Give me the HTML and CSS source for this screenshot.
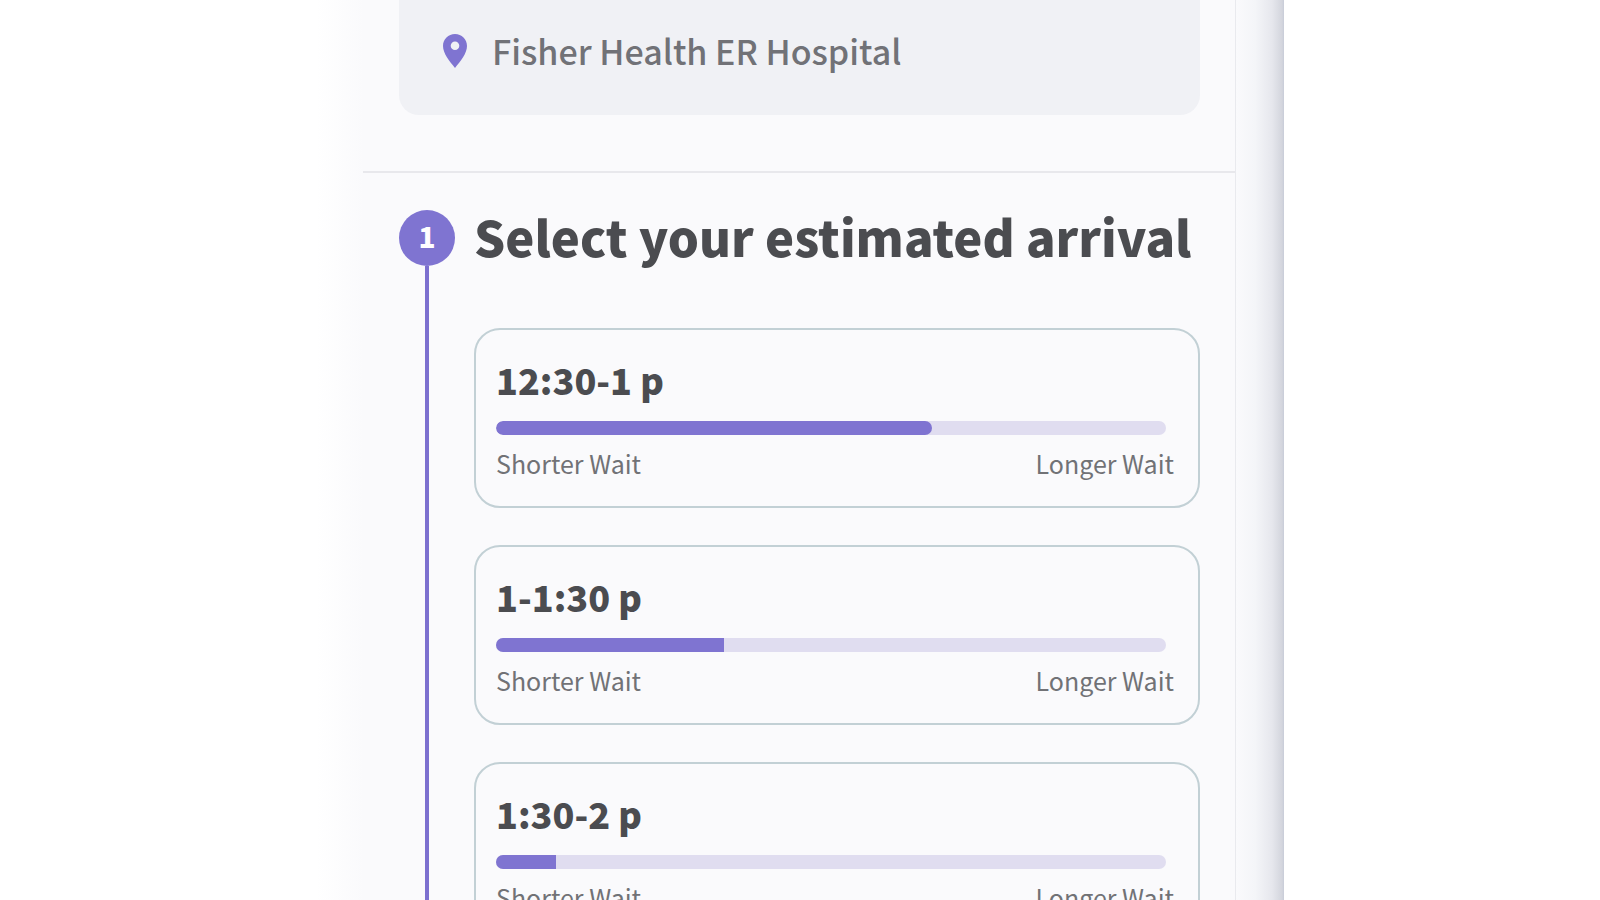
FILE: index.html
```html
<!DOCTYPE html>
<html lang="en">

<head>
    <meta charset="UTF-8">
    <meta name="viewport" content="width=device-width, initial-scale=1.0">
    <title>Select your estimated arrival</title>
    <link rel="stylesheet" href="styles.css">
</head>

<body>
    <div class="phone">
        <main class="screen">
            <div class="location">
                <svg class="pin" viewBox="0 0 24 34" aria-hidden="true">
                    <path fill-rule="evenodd" d="M12 0C5.300 0 0 5.300 0 12c0 7.500 6.500 15 12 22 5.500-7 12-14.500 12-22C24 5.300 18.700 0 12 0zm0 7.500a4.300 4.300 0 1 1 0 8.600 4.300 4.300 0 0 1 0-8.600z"/>
                </svg>
                <p>Fisher Health ER Hospital</p>
            </div>

            <section class="step">
                <div class="step-marker">
                    <span class="step-number">1</span>
                </div>
                <div class="step-content">
                    <h1>Select your estimated arrival</h1>

                    <div class="slots">
                        <button type="button" class="slot">
                            <span class="slot-time">12:30-1 p</span>
                            <span class="bar"><span class="fill rounded" style="width: 65%"></span></span>
                            <span class="labels"><span>Shorter Wait</span><span>Longer Wait</span></span>
                        </button>
                        <button type="button" class="slot">
                            <span class="slot-time">1-1:30 p</span>
                            <span class="bar"><span class="fill" style="width: 34%"></span></span>
                            <span class="labels"><span>Shorter Wait</span><span>Longer Wait</span></span>
                        </button>
                        <button type="button" class="slot">
                            <span class="slot-time">1:30-2 p</span>
                            <span class="bar"><span class="fill" style="width: 9%"></span></span>
                            <span class="labels"><span>Shorter Wait</span><span>Longer Wait</span></span>
                        </button>
                    </div>
                </div>
            </section>
        </main>
        <div class="phone-edge"></div>
    </div>
</body>

</html>
```
FILE: styles.css
```css
* {
    box-sizing: border-box;
}

body {
    margin: 0;
    height: 100vh;
    overflow: hidden;
    background-color: #ffffff;
    font-family: "Noto Sans CJK SC", "Open Sans", sans-serif;
    color: #4b4c50;
}

.phone {
    display: flex;
    max-width: 968px;
    min-height: 100vh;
    margin: 0 auto;
    padding-left: 47px;
    background: linear-gradient(to right, #ffffff, #fafafc 48px);
}

.screen {
    flex: 1;
    border-right: 1px solid #e9eaee;
}

/* shaded side of the phone */
.phone-edge {
    width: 48px;
    background: linear-gradient(to right, #fafafc, #f4f5f8 40%, #e6e7ed 75%, #d3d5dd 96%, #c8ccd8);
}

.location {
    display: flex;
    align-items: center;
    gap: 25px;
    margin: 0 35px 56px 36px;
    padding: 23px 44px 36px;
    border-radius: 0 0 20px 20px;
    background-color: #f0f1f5;
}

.location p {
    margin: 0;
    font-size: 34px;
    font-weight: 500;
    line-height: 56px;
    color: #717277;
}

.pin {
    width: 24px;
    height: 34px;
    fill: #7f74d1;
}

.step {
    display: flex;
    gap: 19px;
    padding: 37px 35px 40px 36px;
    border-top: 2px solid #e8e8ec;
}

.step-marker {
    display: flex;
    flex-direction: column;
    align-items: center;
}

/* line running down beside the slots */
.step-marker::after {
    content: "";
    flex: 1;
    width: 4px;
    background-color: #7c70cf;
}

.step-number {
    width: 56px;
    height: 56px;
    border-radius: 50%;
    background-color: #7f74d1;
    color: #ffffff;
    font-size: 28px;
    font-weight: 900;
    line-height: 52px;
    text-align: center;
}

.step-content {
    flex: 1;
}

h1 {
    margin: 0 0 66px;
    font-size: 49px;
    font-weight: 900;
    line-height: 52px;
}

.slots {
    display: flex;
    flex-direction: column;
    gap: 37px;
}

.slot {
    display: block;
    width: 100%;
    padding: 29px 24px 26px 20px;
    border: 2px solid #c2d0d5;
    border-radius: 26px;
    background-color: transparent;
    color: inherit;
    font-family: inherit;
    text-align: left;
    cursor: pointer;
}

.slot:hover {
    border-color: #7f74d1;
}

.slot-time {
    display: block;
    font-size: 36px;
    font-weight: 900;
    line-height: 40px;
}

.bar {
    display: block;
    height: 14px;
    margin: 22px 8px 11px 0;
    border-radius: 7px;
    background-color: #e0ddf0;
    overflow: hidden;
}

.fill {
    display: block;
    height: 100%;
    background-color: #7f74d1;
}

.rounded {
    border-radius: 7px;
}

.labels {
    display: flex;
    justify-content: space-between;
    font-size: 25px;
    line-height: 34px;
    color: #717276;
}
```
